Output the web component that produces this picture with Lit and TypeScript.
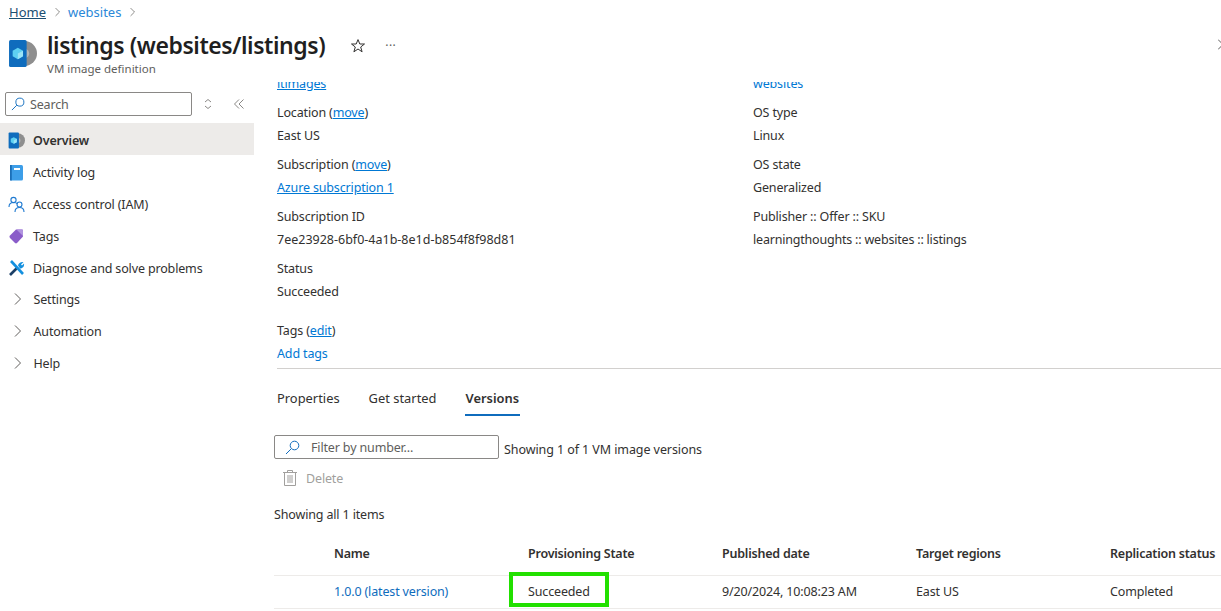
import { LitElement, html, css, svg } from "lit";
import { customElement } from "lit/decorators.js";

const chevron = svg`<path d="M5 1.5 10.5 7 5 12.5" fill="none" stroke="#605e5c" stroke-width="1"/>`;

const diskIcon = (s: number) => html`<svg width=${s} height=${s} viewBox="0 0 28 28">
  <circle cx="16" cy="14" r="12" fill="#8e8e8e"/><circle cx="16" cy="14" r="4.5" fill="#b4b4b4"/>
  <rect x="1" y="1" width="17" height="26" rx="1.5" fill="#0f6cbd"/>
  <path d="M9.5 8.500 14.500 11.300V16.700L9.500 19.500 4.500 16.700V11.300Z" fill="#5ed0f2"/><path d="M9.500 14V19.500L14.500 16.700V11.300Z" fill="#9be4f7"/>
</svg>`;

@customElement("app-root")
export class AppRoot extends LitElement {
  static styles = css`
    :host { display: block; height: 611px; overflow: hidden; font-family: "Noto Sans", sans-serif; font-size: 12.5px; letter-spacing: -0.15px; color: #323130; background: #fff; }
    a { color: #0078d4; text-decoration: none; }
    a.u { text-decoration: underline; }
    .crumbs { display: flex; align-items: center; height: 23px; padding-left: 9px; gap: 6px; letter-spacing: 0; }
    .crumbs a.home { color: #1b4f72; text-decoration: underline; font-size: 13px; }
    .crumbs a { color: #2b88d8; font-size: 13px; }
    .crumbs svg { width: 10px; height: 10px; }
    .head { display: flex; height: 54px; padding-left: 8px; position: relative; letter-spacing: 0; }
    .head-icon { margin-top: 16px; margin-right: 10px; height: 28px; }
    .head-text { padding-top: 6px; }
    .title { font-size: 23px; font-weight: 600; color: #1f1f1f; line-height: 32px; letter-spacing: -0.43px; white-space: nowrap; }
    .sub { font-size: 11.5px; color: #605e5c; line-height: 14px; margin-top: 1px; }
    .star { margin-left: 25px; margin-top: 15px; width: 16px; height: 16px; }
    .more { margin-left: 19px; margin-top: 16px; color: #605e5c; font-size: 12px; line-height: 14px; letter-spacing: 0.5px; }
    .close { position: absolute; right: -7px; top: 16px; width: 10px; height: 11px; }
    .body { display: grid; grid-template-columns: 254px 1fr; height: 534px; }
    .side-top { display: flex; align-items: center; padding: 15px 0 7px 5px; }
    .search { width: 187px; height: 24px; box-sizing: border-box; border: 1px solid #8a8886; border-radius: 2px; display: flex; align-items: center; padding-left: 5px; gap: 5px; color: #605e5c; font-size: 12.5px; }
    .updown { margin-left: 11px; width: 10px; height: 12px; }
    .dbl { margin-left: 20px; width: 12px; height: 12px; }
    .nav { display: flex; flex-direction: column; }
    .nav-item { display: flex; align-items: center; height: 32px; padding-left: 8px; gap: 8px; white-space: nowrap; box-sizing: border-box; }
    .nav-item.ic { padding-top: 2px; }
    .nav-item.sel { background: #edebe9; font-weight: 600; }
    .nav-item svg { width: 17px; height: 17px; flex: none; }
    .nav-item .chev { width: 14px; height: 14px; margin: 0 1.5px 0 2px; }
    .main { margin-top: 5px; padding-left: 23px; overflow: hidden; position: relative; }
    .info { display: grid; grid-template-columns: 476px 1fr; margin-top: -10px; }
    .kv { height: 52px; display: flex; flex-direction: column; line-height: 23px; }
    .kv.first { height: 29px; }
    .col { display: flex; flex-direction: column; }
    .plain { letter-spacing: 0; }
    .tight { letter-spacing: -0.2px; }
    .tags { margin-top: 10px; line-height: 23px; }
    .rule { border-top: 1px solid #d2d0ce; margin-top: 3px; }
    .tabs { display: flex; gap: 29px; margin-top: 14px; height: 33px; letter-spacing: 0; font-size: 12.9px; }
    .tab { line-height: 31px; height: 33px; box-sizing: border-box; }
    .tab.on { border-bottom: 2px solid #0f6cbd; font-weight: 600; padding: 0 1px; margin-left: -1px; }
    .section { margin-left: -3px; }
    .filter { display: flex; align-items: center; gap: 5px; margin-top: 19px; }
    .input { width: 225px; height: 24px; box-sizing: border-box; border: 1px solid #8a8886; border-radius: 2px; display: flex; align-items: center; padding-left: 10px; gap: 11px; color: #605e5c; }
    .filter svg { width: 15px; height: 15px; }
    .count { margin-top: 5px; letter-spacing: -0.08px; }
    .toolbar { display: flex; align-items: center; gap: 8px; margin: 6px 0 0 8px; height: 26px; color: #a19f9d; }
    .toolbar svg { width: 16px; height: 18px; }
    .all { margin-top: 14px; line-height: 20px; }
    .table { margin-top: 14px; width: 1000px; }
    .row { display: grid; grid-template-columns: 254px 194px 194px 194px 1fr; align-items: center; }
    .row.th { height: 37px; padding-bottom: 8px; box-sizing: border-box; font-weight: 600; letter-spacing: -0.22px; border-bottom: 1px solid #edebe9; }
    .row.td { height: 33px; padding-bottom: 2px; box-sizing: border-box; border-bottom: 1px solid #edebe9; position: relative; }
    .row > * { white-space: nowrap; }
    .row > :first-child { padding-left: 60px; }
    .row.td a { color: #0f6cbd; }
    .box { position: absolute; left: 235px; top: -4px; width: 100px; height: 35px; box-sizing: border-box; border: 4px solid #22e000; }
  `;

  render() {
    const search = html`<svg width="14" height="14" viewBox="0 0 15 15"><circle cx="9.500" cy="5.500" r="4.300" fill="none" stroke="#0f6cbd"/><path d="M6.200 8.800 1 14" stroke="#0f6cbd" fill="none"/></svg>`;
    return html`
      <div class="crumbs">
        <a class="home">Home</a>
        <svg viewBox="0 0 14 14">${chevron}</svg>
        <a>websites</a>
        <svg viewBox="0 0 14 14">${chevron}</svg>
      </div>
      <div class="head">
        <div class="head-icon">${diskIcon(29)}</div>
        <div class="head-text">
          <div class="title">listings (websites/listings)</div>
          <div class="sub">VM image definition</div>
        </div>
        <svg class="star" viewBox="0 0 16 16"><path d="M8 1.600 9.800 6h4.700l-3.800 3 1.400 4.800L8 11l-4.100 2.800L5.300 9 1.500 6h4.700Z" fill="none" stroke="#323130"/></svg>
        <div class="more">···</div>
        <svg class="close" viewBox="0 0 10 11"><path d="M0 .5 5 5.500 0 10.500" fill="none" stroke="#605e5c"/></svg>
      </div>
      <div class="body">
        <div>
          <div class="side-top">
            <div class="search">${search}<span>Search</span></div>
            <svg class="updown" viewBox="0 0 10 12"><path d="M2 4 5 1.500 8 4M2 8 5 10.500 8 8" fill="none" stroke="#8a8886"/></svg>
            <svg class="dbl" viewBox="0 0 12 12"><path d="M6 1.500 1.500 6 6 10.500M10.500 1.500 6 6 10.500 10.500" fill="none" stroke="#8a8886"/></svg>
          </div>
          <div class="nav">
            <div class="nav-item ic sel">${diskIcon(17)}<span>Overview</span></div>
            <div class="nav-item ic"><svg viewBox="0 0 17 17"><rect x="2" y="1" width="13" height="15.500" rx="1.500" fill="#3d9ee8"/><rect x="2" y="1" width="1.800" height="15.500" fill="#1b6fb8"/><rect x="6" y="4" width="6" height="2" fill="#fff"/></svg><span>Activity log</span></div>
            <div class="nav-item ic"><svg viewBox="0 0 17 17"><g fill="none" stroke="#1f7ad1" stroke-width="1.100"><circle cx="5.500" cy="4" r="2.600"/><path d="M1 11c0-3 2-4.500 4.500-4.500S9 7 9.500 8"/><circle cx="11.500" cy="8.500" r="2.500"/><path d="M7 16c0-3 2-4.500 4.500-4.500S16 13 16 16"/></g></svg><span>Access control (IAM)</span></div>
            <div class="nav-item ic"><svg viewBox="0 0 17 17"><path d="M2 7.500 8 1.500h6a1 1 0 0 1 1 1v6L9 15a1.500 1.500 0 0 1-2 0L2 10a1.800 1.800 0 0 1 0-2.500Z" fill="#8a5cc9"/><path d="M8.500 1.500h5.500a1 1 0 0 1 1 1v5.500Z" fill="#b194e0"/></svg><span>Tags</span></div>
            <div class="nav-item ic"><svg viewBox="0 0 17 17"><path d="M2 15 9 8" stroke="#1b3f66" stroke-width="2.600"/><path d="M3 1 15 14" stroke="#1490df" stroke-width="2.600"/><path d="M10 5.500c.5-2.500 3-4 5.500-3.500l-2.500 2.500 1 1L16 3.500c.5 2.500-1 5-4 5Z" fill="#1490df"/></svg><span>Diagnose and solve problems</span></div>
            ${["Settings", "Automation", "Help"].map(
              (t) => html`<div class="nav-item"><svg class="chev" viewBox="0 0 14 14">${chevron}</svg><span>${t}</span></div>`
            )}
          </div>
        </div>
        <div class="main">
          <div class="info">
            <div class="col">
              <div class="kv first"><a class="u">ltimages</a></div>
              <div class="kv"><span>Location (<a class="u">move</a>)</span><span>East US</span></div>
              <div class="kv"><span>Subscription (<a class="u">move</a>)</span><a class="u">Azure subscription 1</a></div>
              <div class="kv"><span>Subscription ID</span><span class="plain">7ee23928-6bf0-4a1b-8e1d-b854f8f98d81</span></div>
              <div class="kv"><span>Status</span><span>Succeeded</span></div>
            </div>
            <div class="col">
              <div class="kv first"><a>websites</a></div>
              <div class="kv"><span>OS type</span><span>Linux</span></div>
              <div class="kv"><span>OS state</span><span>Generalized</span></div>
              <div class="kv"><span>Publisher :: Offer :: SKU</span><span class="tight">learningthoughts :: websites :: listings</span></div>
            </div>
          </div>
          <div class="tags"><div>Tags (<a class="u">edit</a>)</div><div><a>Add tags</a></div></div>
          <div class="rule"></div>
          <div class="tabs"><div class="tab">Properties</div><div class="tab">Get started</div><div class="tab on">Versions</div></div>
          <div class="section">
            <div class="filter">
              <div class="input">${search}<span>Filter by number...</span></div>
              <span class="count">Showing 1 of 1 VM image versions</span>
            </div>
            <div class="toolbar"><svg viewBox="0 0 16 18"><path d="M1 3.500H15M5.500 3.500V1.500H10.500V3.500M2.500 3.500V16.500H13.500V3.500M6 6V14M8 6V14M10 6V14" fill="none" stroke="#a19f9d"/></svg><span>Delete</span></div>
            <div class="all">Showing all 1 items</div>
            <div class="table">
              <div class="row th"><span>Name</span><span>Provisioning State</span><span>Published date</span><span>Target regions</span><span>Replication status</span></div>
              <div class="row td"><a>1.0.0 (latest version)</a><span>Succeeded</span><span>9/20/2024, 10:08:23 AM</span><span>East US</span><span>Completed</span><div class="box"></div></div>
            </div>
          </div>
        </div>
      </div>
    `;
  }
}
